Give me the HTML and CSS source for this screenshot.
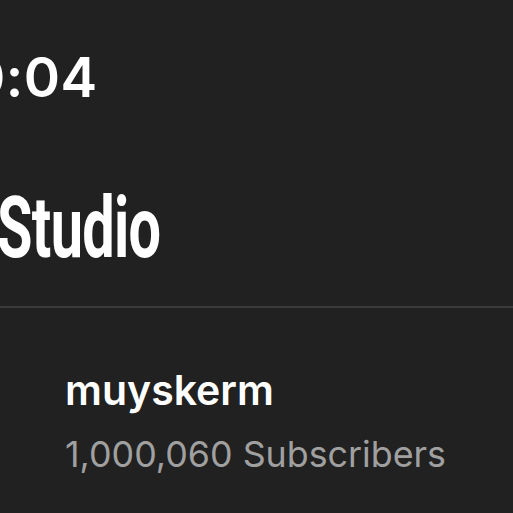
FILE: index.html
```html
<!DOCTYPE html>
<html lang="en">
<head>
    <meta charset="UTF-8">
    <meta name="viewport" content="width=device-width, initial-scale=1.0">
    <title>Studio</title>
    <link rel="stylesheet" href="styles.css">
</head>
<body>
    <div class="screen">
        <!-- status bar clock -->
        <div class="status-bar">
            <span class="clock">0:04</span>
        </div>

        <!-- app title -->
        <header class="app-header">
            <h1 class="app-title">Studio</h1>
        </header>

        <!-- channel info -->
        <section class="channel">
            <div class="channel-name">muyskerm</div>
            <div class="channel-subs">1,000,060 Subscribers</div>
        </section>
    </div>
</body>
</html>
```

FILE: styles.css
```css
html, body {
    margin: 0;
    padding: 0;
    background-color: #212121;
    overflow: hidden;
}

.screen {
    width: 513px;
    height: 513px;
    color: #fff;
    font-family: Inter, "Liberation Sans", sans-serif;
}

.status-bar {
    height: 150px;
    padding-top: 50px;
    box-sizing: border-box;
    margin-left: -31px;
}

.clock {
    font-size: 55px;
    font-weight: 600;
    line-height: 1;
    letter-spacing: 0.5px;
}

.app-header {
    height: 158px;
    border-bottom: 2px solid #3b3b3b;
    box-sizing: border-box;
}

.app-title {
    margin: 0 0 0 -3px;
    padding-top: 35px;
    font-family: Roboto, sans-serif;
    font-weight: 700;
    font-size: 86px;
    line-height: 1;
    transform: scaleX(0.67);
    transform-origin: left top;
    letter-spacing: -1px;
}

.channel {
    padding: 62px 0 0 65px;
}

.channel-name {
    font-size: 41px;
    font-weight: 600;
    line-height: 1;
}

.channel-subs {
    margin-top: 26px;
    font-size: 35.8px;
    font-weight: 400;
    color: #a0a0a0;
    line-height: 1;
}
```
